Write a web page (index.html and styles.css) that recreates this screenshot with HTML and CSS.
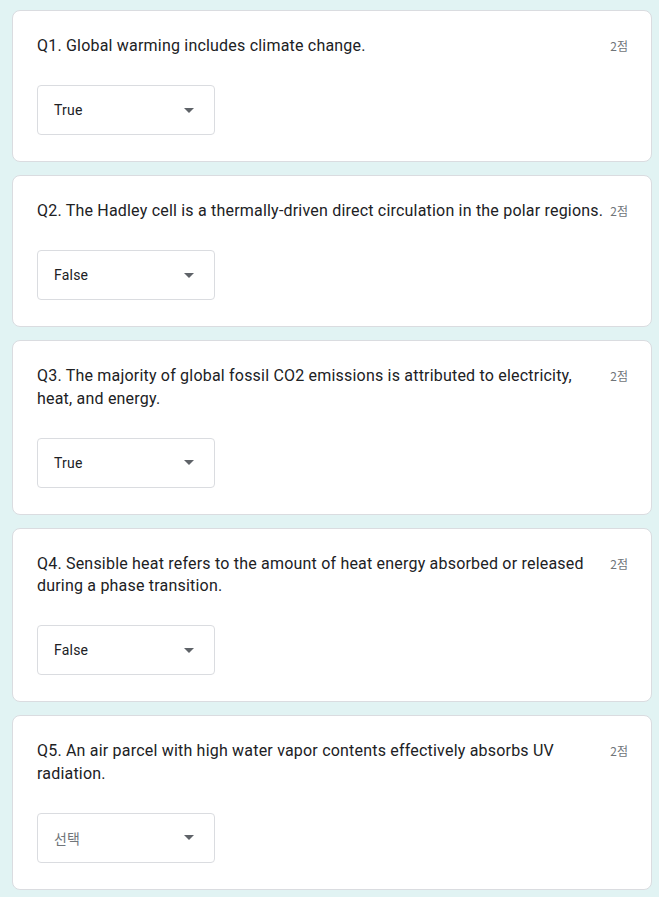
FILE: index.html
```html
<!DOCTYPE html>
<html lang="ko">
<head>
<meta charset="utf-8">
<link rel="stylesheet" href="styles.css">
</head>
<body>
<main class="list">
  <section class="card">
    <div class="head"><div class="title">Q1. Global warming includes climate change.</div><div class="pts">2점</div></div>
    <div class="select"><span class="val">True</span><span class="arrow"></span></div>
  </section>
  <section class="card">
    <div class="head"><div class="title">Q2. The Hadley cell is a thermally-driven direct circulation in the polar regions.</div><div class="pts">2점</div></div>
    <div class="select"><span class="val">False</span><span class="arrow"></span></div>
  </section>
  <section class="card">
    <div class="head"><div class="title">Q3. The majority of global fossil CO2 emissions is attributed to electricity, heat, and energy.</div><div class="pts">2점</div></div>
    <div class="select"><span class="val">True</span><span class="arrow"></span></div>
  </section>
  <section class="card">
    <div class="head"><div class="title">Q4. Sensible heat refers to the amount of heat energy absorbed or released during a phase transition.</div><div class="pts">2점</div></div>
    <div class="select"><span class="val">False</span><span class="arrow"></span></div>
  </section>
  <section class="card">
    <div class="head"><div class="title">Q5. An air parcel with high water vapor contents effectively absorbs UV radiation.</div><div class="pts">2점</div></div>
    <div class="select"><span class="val placeholder">선택</span><span class="arrow"></span></div>
  </section>
</main>
</body>
</html>
```

FILE: styles.css
```css
html, body {
  margin: 0;
  padding: 0;
  background: #e1f3f3;
}
body {
  font-family: Roboto, "Noto Sans CJK KR", sans-serif;
  color: #202124;
}
.list {
  display: flex;
  flex-direction: column;
  gap: 13px;
  width: 640px;
  padding: 10px 0 0 12px;
}
.card {
  background: #fff;
  border: 1px solid #dadce0;
  border-radius: 8px;
  padding: 24px 24px 26px 24px;
}
.head {
  display: flex;
  align-items: flex-start;
  gap: 7px;
}
.title {
  flex: 1;
  font-size: 16px;
  line-height: 22.5px;
  letter-spacing: 0.2px;
}
.pts {
  font-size: 12px;
  line-height: 22.5px;
  color: #70757a;
  font-family: "Noto Sans CJK KR", Roboto, sans-serif;
  margin-right: -1px;
}
.select {
  margin-top: 27.5px;
  width: 140px;
  height: 48px;
  border: 1px solid #dadce0;
  border-radius: 4px;
  display: flex;
  align-items: center;
  justify-content: space-between;
  padding: 0 20px 0 16px;
}
.val {
  font-size: 14px;
  color: #202124;
  letter-spacing: 0.2px;
}
.placeholder {
  color: #70757a;
  font-family: "Noto Sans CJK KR", sans-serif;
}
.arrow {
  width: 0;
  height: 0;
  border-left: 5px solid transparent;
  border-right: 5px solid transparent;
  border-top: 5px solid #5f6368;
}
```
